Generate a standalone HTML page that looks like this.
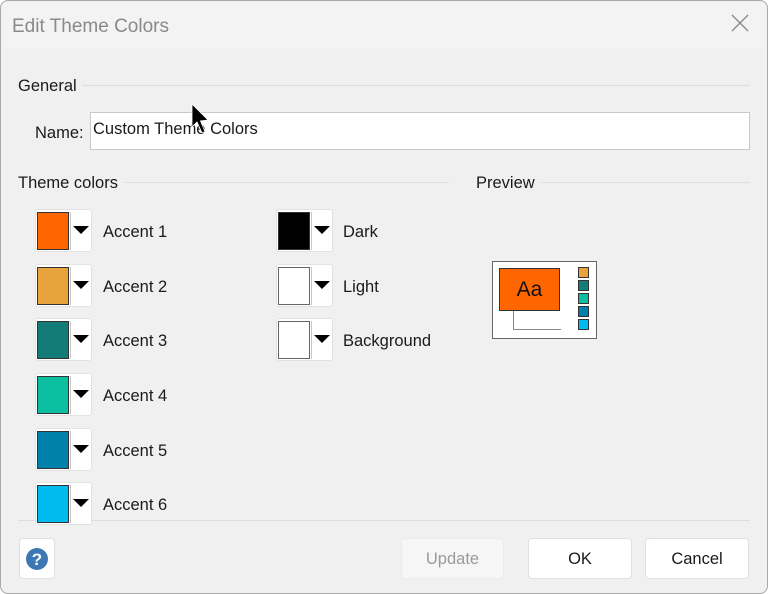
<!DOCTYPE html>
<html><head><meta charset="utf-8"><style>
*{margin:0;padding:0;box-sizing:border-box}
html,body{width:768px;height:594px;overflow:hidden;background:#fff}
body{font-family:"Liberation Sans",sans-serif;font-size:16.5px;color:#1a1a1a;position:relative}
.win{position:absolute;left:0;top:0;width:768px;height:594px;border-radius:8px;background:#f0f0f0;overflow:hidden}
.frame{position:absolute;left:0;top:0;width:768px;height:594px;border:1px solid #a8a8a8;border-radius:8px;pointer-events:none}
.title{position:absolute;left:0;top:0;width:768px;height:48px;background:#f3f3f3}
.a{position:absolute;white-space:nowrap}
.line{position:absolute;height:1px;background:#d9dfe6}
.sw{position:absolute;width:57px;height:43px;background:#fff;border:1px solid #e2e2e2;border-radius:3px}
.sw .c{position:absolute;left:1px;top:2px;width:32px;height:38px;border:1px solid #333}
.sw .d{position:absolute;left:34px;top:2px;width:1px;height:38px;background:#c8c8c8}
.sw .t{position:absolute;left:37px;top:16px;width:0;height:0;border-left:8.5px solid transparent;border-right:8.5px solid transparent;border-top:8px solid #000}
.btn{position:absolute;height:41px;background:#fff;border:1px solid #e0e0e0;border-radius:4px;text-align:center;line-height:41px}
.sq{position:absolute;left:578px;width:11px;height:11px;border:1px solid #333}
</style></head><body>
<div class="win">
<div class="title"></div>
<div class="a" style="left:12px;top:16px;font-size:19px;color:#8a8a8a">Edit Theme Colors</div>
<svg class="a" style="left:731px;top:14px" width="18" height="18"><path d="M1 1L17 17M17 1L1 17" stroke="#8a8a8a" stroke-width="1.4"/></svg>

<div class="a" style="left:18px;top:77px">General</div>
<div class="line" style="left:82px;top:85px;width:668px"></div>
<div class="a" style="left:35px;top:124px">Name:</div>
<div class="a" style="left:90px;top:112px;width:660px;height:38px;background:#fff;border:1px solid #c8c8c8"></div>
<div class="a" style="left:93px;top:120px">Custom Theme Colors</div>

<div class="a" style="left:18px;top:174px">Theme colors</div>
<div class="line" style="left:124px;top:182px;width:325px"></div>
<div class="a" style="left:476px;top:174px">Preview</div>
<div class="line" style="left:541px;top:182px;width:209px"></div>

<div class="line" style="left:18px;top:520px;width:732px"></div>

<div class="sw" style="left:35px;top:209px"><div class="c" style="background:#ff6600"></div><div class="d"></div><div class="t"></div></div>
<div class="a" style="left:103px;top:223px">Accent 1</div>
<div class="sw" style="left:35px;top:264px"><div class="c" style="background:#e8a33d"></div><div class="d"></div><div class="t"></div></div>
<div class="a" style="left:103px;top:278px">Accent 2</div>
<div class="sw" style="left:35px;top:318px"><div class="c" style="background:#137c76"></div><div class="d"></div><div class="t"></div></div>
<div class="a" style="left:103px;top:332px">Accent 3</div>
<div class="sw" style="left:35px;top:373px"><div class="c" style="background:#0dbfa1"></div><div class="d"></div><div class="t"></div></div>
<div class="a" style="left:103px;top:387px">Accent 4</div>
<div class="sw" style="left:35px;top:428px"><div class="c" style="background:#0081ab"></div><div class="d"></div><div class="t"></div></div>
<div class="a" style="left:103px;top:442px">Accent 5</div>
<div class="sw" style="left:35px;top:482px"><div class="c" style="background:#00bbed"></div><div class="d"></div><div class="t"></div></div>
<div class="a" style="left:103px;top:496px">Accent 6</div>

<div class="sw" style="left:276px;top:209px"><div class="c" style="background:#000"></div><div class="d"></div><div class="t"></div></div>
<div class="a" style="left:343px;top:223px">Dark</div>
<div class="sw" style="left:276px;top:264px"><div class="c" style="background:#fff;border-color:#666"></div><div class="d"></div><div class="t"></div></div>
<div class="a" style="left:343px;top:278px">Light</div>
<div class="sw" style="left:276px;top:318px"><div class="c" style="background:#fff;border-color:#666"></div><div class="d"></div><div class="t"></div></div>
<div class="a" style="left:343px;top:332px">Background</div>

<div class="a" style="left:492px;top:261px;width:105px;height:78px;background:#fff;border:1px solid #666"></div>
<div class="a" style="left:499px;top:268px;width:61px;height:43px;background:#ff6600;border:1px solid #333;text-align:center;line-height:41px;font-size:21px;color:#111">Aa</div>
<div class="a" style="left:513px;top:311px;width:48px;height:19px;border-left:1px solid #888;border-bottom:1px solid #888"></div>
<div class="sq" style="top:267px;background:#e8a33d"></div>
<div class="sq" style="top:280px;background:#137c76"></div>
<div class="sq" style="top:293px;background:#0dbfa1"></div>
<div class="sq" style="top:306px;background:#0081ab"></div>
<div class="sq" style="top:319px;background:#00bbed"></div>

<div class="btn" style="left:19px;top:538px;width:36px"><svg style="margin-top:8px" width="24" height="24"><circle cx="12" cy="12" r="11" fill="#3d78b5"/><text x="12" y="18" text-anchor="middle" font-family="Liberation Sans" font-weight="bold" font-size="17" fill="#fff">?</text></svg></div>
<div class="btn" style="left:401px;top:538px;width:103px;background:#f6f6f6;border-color:#ececec;color:#9a9a9a">Update</div>
<div class="btn" style="left:528px;top:538px;width:104px">OK</div>
<div class="btn" style="left:645px;top:538px;width:104px">Cancel</div>

<svg class="a" style="left:191px;top:103px" width="20" height="32"><path d="M1 1L1 24L6 19L11 30L14 28.5L9.5 18L17 17Z" fill="#000" stroke="#fff" stroke-width="0.8"/></svg>
</div>
<div class="frame"></div>
</body></html>
